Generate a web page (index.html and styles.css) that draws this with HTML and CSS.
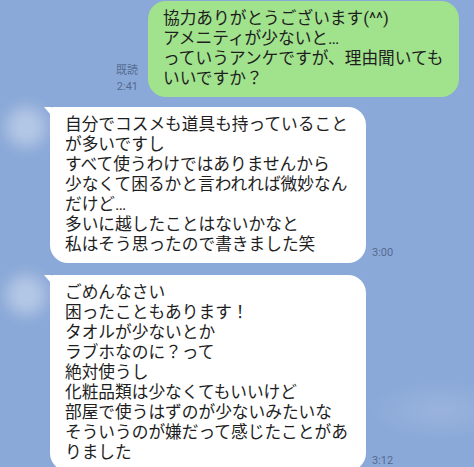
FILE: index.html
```html
<!DOCTYPE html>
<html lang="ja">
<head>
  <meta charset="UTF-8" />
  <title>トーク</title>
  <link rel="stylesheet" href="styles.css">
</head>
<body>
  <div class="chat">
    <div class="row out">
      <div class="meta">
        <span>既読</span>
        <span>2:41</span>
      </div>
      <div class="bubble green">
        <p>協力ありがとうございます(^^)</p>
        <p>アメニティが少ないと…</p>
        <p>っていうアンケですが、理由聞いても</p>
        <p>いいですか？</p>
      </div>
    </div>

    <div class="row in">
      <div class="avatar"></div>
      <div class="bubble white">
        <p>自分でコスメも道具も持っていること</p>
        <p>が多いですし</p>
        <p>すべて使うわけではありませんから</p>
        <p>少なくて困るかと言われれば微妙なん</p>
        <p>だけど…</p>
        <p>多いに越したことはないかなと</p>
        <p>私はそう思ったので書きました笑</p>
      </div>
      <div class="meta">
        <span>3:00</span>
      </div>
    </div>

    <div class="row in">
      <div class="avatar"></div>
      <div class="bubble white">
        <p>ごめんなさい</p>
        <p>困ったこともあります！</p>
        <p>タオルが少ないとか</p>
        <p>ラブホなのに？って</p>
        <p>絶対使うし</p>
        <p>化粧品類は少なくてもいいけど</p>
        <p>部屋で使うはずのが少ないみたいな</p>
        <p>そういうのが嫌だって感じたことがあ</p>
        <p>りました</p>
      </div>
      <div class="meta">
        <span>3:12</span>
      </div>
    </div>
  </div>
</body>
</html>
```

FILE: styles.css
```css
html, body {
  margin: 0;
  padding: 0;
}

body {
  width: 474px;
  height: 467px;
  overflow: hidden;
  background:
    radial-gradient(ellipse 70px 30px at 440px 410px, rgba(255, 255, 255, 0.12), transparent),
    #8ba9d8;
  font-family: Roboto, "Noto Sans CJK JP", sans-serif;
  color: #1e1e1e;
}

.chat {
  display: flex;
  flex-direction: column;
}

.row {
  display: flex;
  align-items: flex-end;
}

.row.out {
  justify-content: flex-end;
  padding-right: 15px;
  margin-top: 1px;
}

.row.in {
  align-items: stretch;
  margin-top: 10px;
}

.row.in + .row.in {
  margin-top: 12px;
}

.bubble {
  position: relative;
  font-size: 16.7px;
  white-space: nowrap;
  padding: 8px 12px 8px 15px;
  border-radius: 18px;
  box-sizing: border-box;
}

.bubble p {
  margin: 0;
  height: 20px;
  line-height: 20px;
}

.green {
  width: 311px;
  background: #a1e28d;
}

.white {
  width: 316px;
  background: #fff;
  border-top-left-radius: 3px;
}

.white::before {
  content: "";
  position: absolute;
  left: -6px;
  top: 0;
  border-top: 8px solid #fff;
  border-left: 7px solid transparent;
}

.meta {
  display: flex;
  flex-direction: column;
  font-size: 11px;
  line-height: 16px;
  color: #566b90;
  padding-bottom: 2px;
}

.out .meta {
  margin-right: 10px;
  align-items: flex-end;
}

.in .meta {
  align-self: flex-end;
  margin-left: 6px;
}

.avatar {
  width: 40px;
  height: 40px;
  margin: 0 4px 0 6px;
  border-radius: 50%;
  background: rgba(255, 255, 255, 0.35);
  filter: blur(7px);
}
```
